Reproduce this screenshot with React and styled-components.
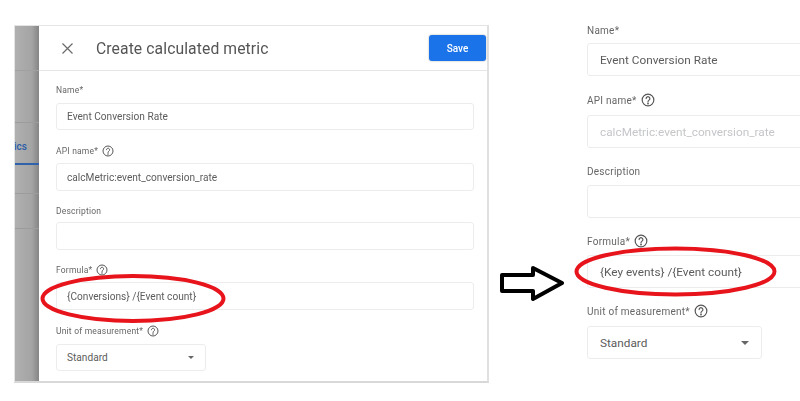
import React from 'react';
import styled, { createGlobalStyle } from 'styled-components';

const Global = createGlobalStyle`
    html, body {
        margin: 0;
        padding: 0;
        background: #fff;
    }
    body {
        font-family: Roboto, "Liberation Sans", sans-serif;
        overflow: hidden;
    }
`

const Page = styled.div`
    position: relative;
    display: flex;
    align-items: flex-start;
    width: 800px;
    height: 401px;
    overflow: hidden;
    background: #fff;
`

// left screenshot
const Shot = styled.div`
    display: flex;
    flex: none;
    width: 475px;
    height: 358px;
    margin: 25px 0 0 14px;
    border: 1px solid #e4e4e4;
    border-bottom: 2px solid #d8d8d8;
    border-right: 2px solid #e0e0e0;
    box-sizing: border-box;
    filter: blur(0.35px);
`

const Backdrop = styled.div`
    display: flex;
    flex-direction: column;
    flex: none;
    width: 24px;
    background: linear-gradient(to right, #b0b0b0, #a4a4a4 70%, #858585);
`

const BackdropRow = styled.div`
    box-sizing: border-box;
    height: ${p => p.$h}px;
    border-bottom: ${p => p.$weight || 1}px solid ${p => p.$line || '#999'};
    overflow: hidden;
    display: flex;
    align-items: flex-end;
`

const TabText = styled.span`
    font-size: 10px;
    font-weight: 500;
    color: #2a5ca8;
    margin-left: -1px;
    padding-bottom: 10px;
    line-height: 12px;
`

const Dialog = styled.div`
    flex: 1;
    display: flex;
    flex-direction: column;
    background: #fff;
    min-width: 0;
`

const DialogHead = styled.div`
    display: flex;
    align-items: center;
    height: 45px;
    flex: none;
    box-sizing: border-box;
    border-bottom: 1px solid #e6e6e6;
    padding: 0 1px 0 23px;
`

const Title = styled.h1`
    margin: 0 0 0 23px;
    font-size: 15.7px;
    font-weight: 400;
    color: #555;
    flex: 1;
    letter-spacing: 0.1px;
`

const SaveButton = styled.button`
    flex: none;
    width: 57px;
    height: 26px;
    border: none;
    border-radius: 3px;
    background: #1a73e8;
    color: #fff;
    font-family: inherit;
    font-size: 10px;
    font-weight: 500;
    padding: 0;
    box-shadow: 0 0 2px rgba(0, 0, 0, 0.35);
`

const DialogBody = styled.div`
    display: flex;
    flex-direction: column;
    padding: 12px 13px 0 17px;
`

const Label = styled.div`
    display: flex;
    align-items: center;
    gap: 4px;
    height: ${p => (p.$big ? 16 : 14)}px;
    font-size: ${p => (p.$big ? 10 : 8.5)}px;
    letter-spacing: ${p => (p.$big ? 0.25 : 0.2)}px;
    color: #666;
`

const Box = styled.div`
    display: flex;
    align-items: center;
    justify-content: space-between;
    box-sizing: border-box;
    height: ${p => p.$h}px;
    width: ${p => (p.$w ? `${p.$w}px` : 'auto')};
    margin-top: ${p => p.$top}px;
    margin-bottom: ${p => p.$bottom}px;
    padding: 0 ${p => (p.$big ? 12 : 11)}px 0 ${p => (p.$big ? 12 : 10)}px;
    border: 1px solid #ececec;
    border-radius: 3px;
    font-size: ${p => (p.$big ? 11.8 : 10.15)}px;
    color: ${p => (p.$muted ? '#c4c6c9' : '#5c5c5c')};
    background: #fff;
`

const Caret = styled.span`
    width: 0;
    height: 0;
    border-left: ${p => (p.$big ? 4.5 : 3.5)}px solid transparent;
    border-right: ${p => (p.$big ? 4.5 : 3.5)}px solid transparent;
    border-top: ${p => (p.$big ? 4.5 : 3.5)}px solid #666;
`

// right hand panel
const Panel = styled.div`
    display: flex;
    flex-direction: column;
    flex: none;
    width: 240px;
    margin: 22px 0 0 98px;
    filter: blur(0.35px);
`

// annotations lying over the screenshots
const Overlay = styled.svg`
    position: absolute;
    left: 0;
    top: 0;
    pointer-events: none;
`

const Help = ({ size }) => (
    <svg width={size} height={size} viewBox="0 0 24 24" fill="none" stroke="#555" strokeWidth="2">
        <circle cx="12" cy="12" r="10" />
        <path d="M8.8 9.5a3.2 3.2 0 1 1 5 2.7c-1.2.8-1.8 1.5-1.8 2.8" strokeLinecap="round" />
        <circle cx="12" cy="18" r="0.6" fill="#555" />
    </svg>
)

const Close = () => (
    <svg width="11" height="11" viewBox="0 0 11 11" stroke="#6a6a6a" strokeWidth="1.2">
        <path d="M0.5 0.5l10 10M10.5 0.5l-10 10" />
    </svg>
)

const App = () => {
    return (
        <Page>
            <Global />
            <Shot>
                <Backdrop>
                    <BackdropRow $h={45} $line="#a0a0a0" />
                    <BackdropRow $h={52} $line="#9c9c9c" />
                    <BackdropRow $h={42} $weight={2} $line="#2f62ab"><TabText>ics</TabText></BackdropRow>
                    <BackdropRow $h={29} $line="#9c9c9c" />
                    <BackdropRow $h={35} $line="#9c9c9c" />
                </Backdrop>
                <Dialog>
                    <DialogHead>
                        <Close />
                        <Title>Create calculated metric</Title>
                        <SaveButton>Save</SaveButton>
                    </DialogHead>
                    <DialogBody>
                        <Label>Name*</Label>
                        <Box $h={27} $top={6} $bottom={14}>Event Conversion Rate</Box>
                        <Label>API name* <Help size={12} /></Label>
                        <Box $h={28} $top={5} $bottom={13}>calcMetric:event_conversion_rate</Box>
                        <Label>Description</Label>
                        <Box $h={28} $top={4} $bottom={13}></Box>
                        <Label>Formula* <Help size={12} /></Label>
                        <Box $h={28} $top={5} $bottom={14}>{'{Conversions} /{Event count}'}</Box>
                        <Label>Unit of measurement* <Help size={12} /></Label>
                        <Box $h={27} $w={150} $top={6} $bottom={0}>Standard <Caret /></Box>
                    </DialogBody>
                </Dialog>
            </Shot>
            <Panel>
                <Label $big>Name*</Label>
                <Box $big $h={33} $top={5} $bottom={16}>Event Conversion Rate</Box>
                <Label $big>API name* <Help size={14} /></Label>
                <Box $big $muted $h={33} $top={7} $bottom={15}>calcMetric:event_conversion_rate</Box>
                <Label $big>Description</Label>
                <Box $big $h={33} $top={6} $bottom={15}></Box>
                <Label $big>Formula* <Help size={14} /></Label>
                <Box $big $h={33} $top={6} $bottom={15}>{'{Key events} /{Event count}'}</Box>
                <Label $big>Unit of measurement* <Help size={14} /></Label>
                <Box $big $h={33} $w={175} $top={7} $bottom={0}>Standard <Caret $big /></Box>
            </Panel>
            <Overlay width="800" height="401" viewBox="0 0 800 401">
                <ellipse cx="133" cy="298.500" rx="90.500" ry="22.500" fill="none" stroke="#e8141c" strokeWidth="4" />
                <ellipse cx="675.500" cy="271.500" rx="99" ry="23" fill="none" stroke="#e8141c" strokeWidth="4" />
                <path d="M502 275H533V268L562 283L533 299V291H502Z" fill="#fff" stroke="#000" strokeWidth="4" strokeLinejoin="round" />
            </Overlay>
        </Page>
    );
}

export default App;
